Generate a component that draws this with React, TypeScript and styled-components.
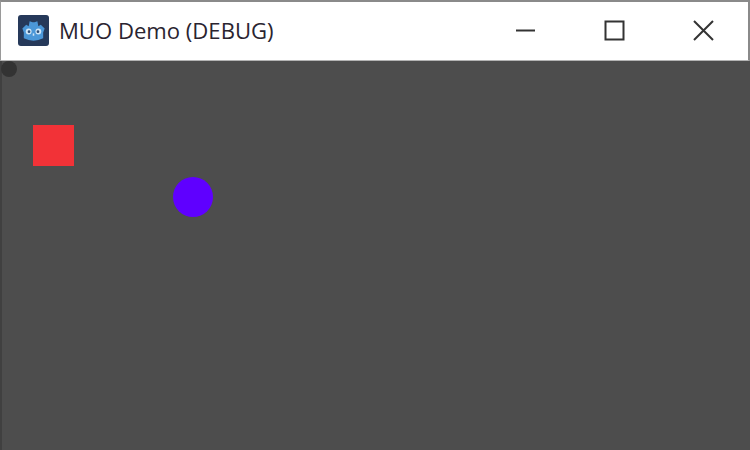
import React from "react";
import styled, { createGlobalStyle } from "styled-components";

const Global = createGlobalStyle`
  html, body { margin: 0; padding: 0; background: #4d4d4d; overflow: hidden; }
`;

const Window = styled.div`
  width: 750px;
  height: 450px;
  display: flex;
  flex-direction: column;
  overflow: hidden;
  background: #4d4d4d;
`;

const TitleBar = styled.header`
  flex: none;
  height: 61px;
  box-sizing: border-box;
  display: flex;
  align-items: center;
  padding-left: 17px;
  background: #ffffff;
  border-top: 2px solid #8a8a8a;
  border-left: 1px solid #9a9a9a;
  border-right: 2px solid #8a8a8a;
  border-bottom: 1px solid #b4b4b4;
`;

const AppIcon = styled.svg`
  flex: none;
  width: 31px;
  height: 31px;
  margin-bottom: 2px;
`;

const Title = styled.h1`
  flex: 1;
  margin: 0 0 2px 10px;
  font: 400 22.1px/1 "Open Sans", "Noto Sans", sans-serif;
  color: #2a2430;
  white-space: nowrap;
`;

const Controls = styled.div`
  flex: none;
  display: flex;
  align-items: center;
  margin-bottom: 2px;
`;

const ControlButton = styled.button`
  width: 89px;
  height: 56px;
  display: flex;
  align-items: center;
  justify-content: center;
  padding: 0;
  border: 0;
  background: transparent;
`;

const Glyph = styled.svg`
  width: 21px;
  height: 21px;
  fill: none;
  stroke: #333333;
  stroke-width: 2;
`;

const Canvas = styled.main`
  position: relative;
  flex: 1;
  background: #4d4d4d;
  border-left: 2px solid #404040;
`;

const Dot = styled.div<{ $x: number; $y: number; $size: number; $color: string }>`
  position: absolute;
  left: ${(p) => p.$x}px;
  top: ${(p) => p.$y}px;
  width: ${(p) => p.$size}px;
  height: ${(p) => p.$size}px;
  border-radius: 50%;
  background: ${(p) => p.$color};
`;

const Square = styled.div`
  position: absolute;
  left: 31px;
  top: 64px;
  width: 41px;
  height: 41px;
  background: #f23237;
`;

export default function App() {
  return (
    <Window>
      <Global />
      <TitleBar>
        <AppIcon viewBox="0 0 32 32" aria-hidden="true">
          <rect width="32" height="32" rx="3" fill="#26395a" />
          <path
            d="M4.5 14 L8.5 10 L11 11.5 L12 6.5 L15 7.5 L17 7.5 L20 6.5 L21 11.5 L23.5 10 L27.5 14 L26 18 L26 24 Q16 29 6 24 L6 18 Z"
            fill="#4b97d8"
          />
          <circle cx="11" cy="17" r="3" fill="#cfe6f8" />
          <circle cx="21" cy="17" r="3" fill="#cfe6f8" />
          <circle cx="11.4" cy="17.2" r="1.4" fill="#2f4f78" />
          <circle cx="20.6" cy="17.2" r="1.4" fill="#2f4f78" />
          <rect x="15.2" y="19" width="1.6" height="2.4" fill="#cfe6f8" />
        </AppIcon>
        <Title>MUO Demo (DEBUG)</Title>
        <Controls>
          <ControlButton aria-label="Minimize">
            <Glyph viewBox="0 0 21 21"><path d="M1 10.5 H20" /></Glyph>
          </ControlButton>
          <ControlButton aria-label="Maximize">
            <Glyph viewBox="0 0 21 21"><rect x="1.5" y="1.5" width="18" height="18" /></Glyph>
          </ControlButton>
          <ControlButton aria-label="Close">
            <Glyph viewBox="0 0 21 21"><path d="M1 1 L20 20 M20 1 L1 20" /></Glyph>
          </ControlButton>
        </Controls>
      </TitleBar>
      <Canvas>
        <Dot $x={-1} $y={0} $size={16} $color="#333333" />
        <Square />
        <Dot $x={171} $y={116} $size={40} $color="#5f00ff" />
      </Canvas>
    </Window>
  );
}
